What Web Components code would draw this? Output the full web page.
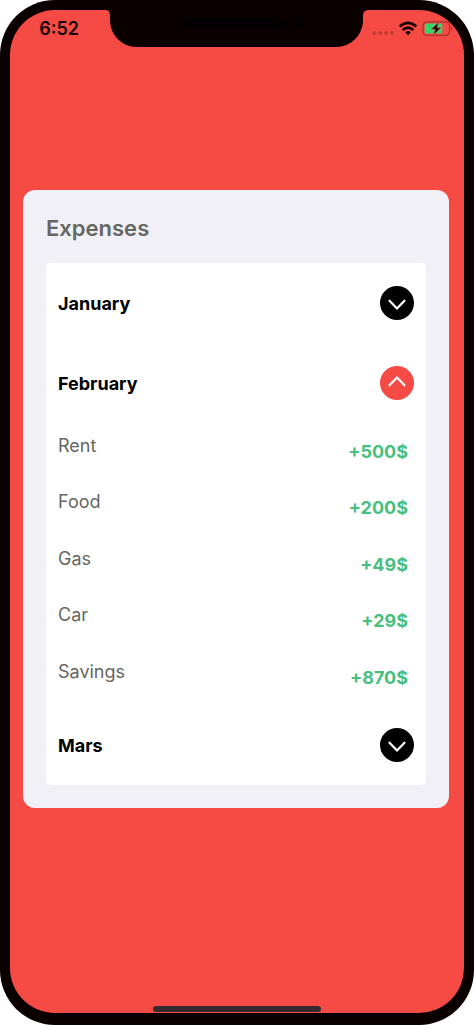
<!DOCTYPE html>
<html lang="en">
<head>
<meta charset="utf-8">
<meta name="viewport" content="width=device-width, initial-scale=1">
<title>Expenses</title>
<style>
  body { margin: 0; background: #fff; font-family: Inter, "Liberation Sans", sans-serif; }
</style>
</head>
<body>
<phone-frame>
  <status-bar slot="status" time="6:52"></status-bar>
  <expense-card heading="Expenses">
    <month-section name="January"></month-section>
    <month-section name="February" open>
      <expense-item label="Rent" amount="+500$"></expense-item>
      <expense-item label="Food" amount="+200$"></expense-item>
      <expense-item label="Gas" amount="+49$"></expense-item>
      <expense-item label="Car" amount="+29$"></expense-item>
      <expense-item label="Savings" amount="+870$"></expense-item>
    </month-section>
    <month-section name="Mars"></month-section>
  </expense-card>
</phone-frame>
<script>
class BaseElement extends HTMLElement {
  constructor() {
    super();
    this.attachShadow({ mode: 'open' });
  }
  connectedCallback() { this.shadowRoot.innerHTML = this.render(); }
}

customElements.define('phone-frame', class extends BaseElement {
  render() {
    return `<style>
      :host { display: flex; box-sizing: border-box; min-height: 100vh; padding: 10px 10px 12px; background: #0b0000; border-radius: 55px; }
      .screen { flex: 1; display: flex; flex-direction: column; background: #f54b44; border-radius: 45px; overflow: hidden; }
      main { flex: 1; padding: 143px 15px 24px 13px; }
      .home { align-self: center; width: 37%; height: 6px; margin-bottom: 1px; border-radius: 3px; background: #332c2e; }
    </style>
    <div class="screen">
      <slot name="status"></slot>
      <main><slot></slot></main>
      <div class="home"></div>
    </div>`;
  }
});

customElements.define('status-bar', class extends BaseElement {
  render() {
    return `<style>
      :host { display: grid; grid-template-columns: 1fr 264px 1fr; height: 37px; color: #150000; }
      .time { justify-self: end; padding-right: 26px; font-size: 18px; line-height: 37px; font-weight: 600; }
      .icons { padding-left: 1px; padding-top: 10px; }
      svg { display: block; }
    </style>
    <span class="time">${this.getAttribute('time')}</span>
    <svg width="264" height="37" viewBox="0 0 264 37" aria-hidden="true">
      <path fill="#0b0000" d="M0 0C4 0 5 2 5 6V10C5 25 17 37 32 37H231C246 37 258 25 258 10V6C258 2 260 0 264 0Z"/>
      <rect x="79" y="8" width="100" height="10" rx="5" fill="#020000"/>
      <rect x="190" y="8" width="10" height="10" rx="4" fill="#020000"/>
    </svg>
    <div class="icons">
      <svg width="86" height="18" viewBox="0 0 86 18" role="img" aria-label="Wi-Fi, battery charging">
        <g fill="#c23d37">
          <circle cx="4.5" cy="13" r="2"/><circle cx="10.3" cy="13" r="2"/>
          <circle cx="16.1" cy="13" r="2"/><circle cx="21.9" cy="13" r="2"/>
        </g>
        <g fill="none" stroke="#150000" stroke-width="2.7">
          <path d="M29.7 6.6Q38 -.9 46.3 6.6"/>
          <path d="M32.7 10Q38 5.1 43.3 10"/>
        </g>
        <path fill="#150000" d="M35.3 12.2Q38 10 40.7 12.2L38 15.2Z"/>
        <rect x="53" y="1.8" width="26.5" height="13.6" rx="4" fill="none" stroke="#a8322c" stroke-width="1.2"/>
        <rect x="54.8" y="3.6" width="17.5" height="10" rx="2" fill="#38d56a"/>
        <path fill="#a8322c" d="M81 6.2Q84 8.6 81 11Z"/>
        <path fill="#150000" stroke="#f54b44" stroke-width=".6" d="M68.5 2.4L61.3 9.2H65.3L63.6 14.8L71 7.8H66.9Z"/>
      </svg>
    </div>`;
  }
});

customElements.define('expense-card', class extends BaseElement {
  render() {
    return `<style>
      :host { display: block; padding: 23px; background: #f1f0f7; border-radius: 12px; }
      h1 { margin: 0 0 20px; font-size: 22px; line-height: 30px; font-weight: 600; color: #666663; }
      .list { background: #fff; border-radius: 5px; }
    </style>
    <h1>${this.getAttribute('heading')}</h1>
    <div class="list"><slot></slot></div>`;
  }
});

customElements.define('month-section', class extends BaseElement {
  render() {
    const open = this.hasAttribute('open');
    const name = this.getAttribute('name');
    return `<style>
      :host { display: block; padding: 0 12px; }
      header { display: flex; align-items: center; justify-content: space-between; height: 80px; }
      h2 { margin: 0; padding-top: 2px; font-size: 18px; line-height: 24px; font-weight: 700; color: #000; }
      button { width: 34px; height: 34px; padding: 0; border: 0; border-radius: 50%; background: #000; color: #fff; }
      svg { display: block; }
      .items { display: none; grid-auto-rows: 1fr; min-height: 282px; }
      :host([open]) .items { display: grid; }
      :host([open]) button { background: #f54b44; }
      :host([open]) svg { transform: rotate(180deg); }
    </style>
    <header>
      <h2 id="name">${name}</h2>
      <button type="button" aria-labelledby="name" aria-expanded="${open}">
        <svg width="34" height="34" viewBox="0 0 34 34" fill="none" stroke="currentColor" stroke-width="2.2" stroke-linecap="round" stroke-linejoin="round" aria-hidden="true"><path d="M9.5 14.7L17 22.6L24.5 14.7"/></svg>
      </button>
    </header>
    <div class="items"><slot></slot></div>`;
  }
  connectedCallback() {
    super.connectedCallback();
    const button = this.shadowRoot.querySelector('button');
    button.addEventListener('click', () => {
      button.setAttribute('aria-expanded', this.toggleAttribute('open'));
    });
  }
});

customElements.define('expense-item', class extends BaseElement {
  render() {
    return `<style>
      :host { display: flex; justify-content: space-between; font-size: 18px; line-height: 24px; }
      .label { padding-top: 11px; color: #666663; }
      .amount { padding: 17px 6px 0 0; font-weight: 700; color: #48bf7f; }
    </style>
    <span class="label">${this.getAttribute('label')}</span>
    <span class="amount">${this.getAttribute('amount')}</span>`;
  }
});
</script>
</body>
</html>
